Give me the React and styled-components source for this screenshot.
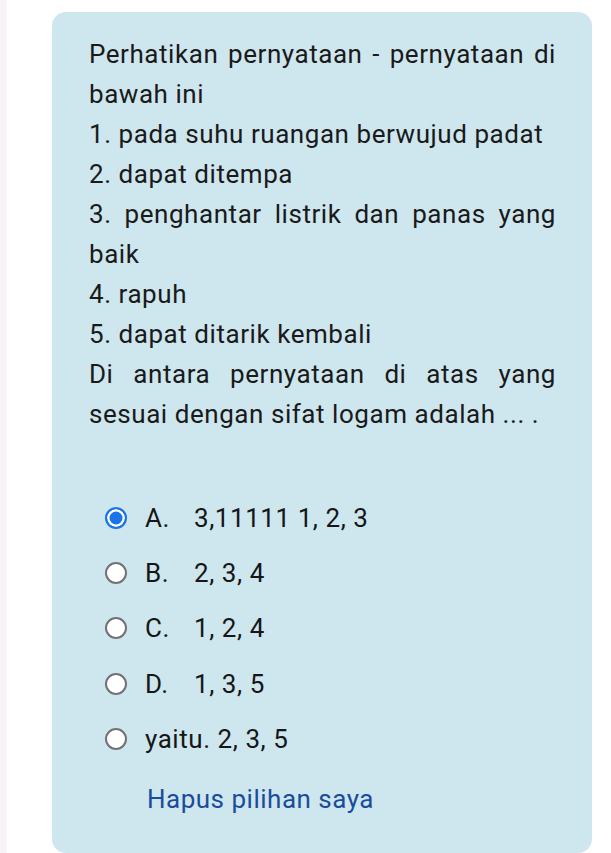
import React, { useState } from 'react'
import styled, { createGlobalStyle } from 'styled-components'

const GlobalStyle = createGlobalStyle`
  html, body {
    margin: 0;
    padding: 0;
    background: #ffffff;
  }
  body {
    font-family: Roboto, "Noto Sans", Arial, sans-serif;
    color: #1b1b1b;
  }
`

const Page = styled.div`
  display: flex;
  min-height: 853px;
  background: #ffffff;
  border-left: 7px solid #f8f3f6;
  box-sizing: border-box;
`

const Card = styled.section`
  margin: 12px 0 0 45px;
  width: 540px;
  box-sizing: border-box;
  padding: 22px 36px 34px 37px;
  background: #cee6ee;
  border-radius: 14px;
  align-self: flex-start;
`

const Question = styled.div`
  font-size: 26px;
  letter-spacing: 0.55px;
  line-height: 40px;
  text-align: justify;
  color: #1a1a1a;

  p {
    margin: 0;
  }
`

const Options = styled.div`
  margin-top: 56px;
  padding-left: 16px;
  display: flex;
  flex-direction: column;
`

const Option = styled.label`
  display: flex;
  align-items: center;
  height: 55.3px;
  font-size: 26px;
  letter-spacing: 0.55px;
  color: #161616;
  cursor: pointer;
`

const Radio = styled.span`
  flex: none;
  width: 22px;
  height: 22px;
  border-radius: 50%;
  box-sizing: border-box;
  background: ${({ checked }) => (checked ? '#1a73e8' : '#ffffff')};
  border: ${({ checked }) => (checked ? '2.5px solid #1a73e8' : '2.5px solid #727272')};
  box-shadow: ${({ checked }) => (checked ? 'inset 0 0 0 2.5px #ffffff' : 'none')};
  margin-right: 18px;
`

const Letter = styled.span`
  display: inline-block;
  width: 49px;
`

const Clear = styled.button`
  margin: 13px 0 0 58px;
  padding: 0;
  border: none;
  background: none;
  font-family: inherit;
  font-size: 26px;
  letter-spacing: 0.5px;
  line-height: 40px;
  color: #1b4c9c;
  cursor: pointer;
  text-align: left;
`

const choices = [
  { letter: 'A.', text: '3,11111 1, 2, 3' },
  { letter: 'B.', text: '2, 3, 4' },
  { letter: 'C.', text: '1, 2, 4' },
  { letter: 'D.', text: '1, 3, 5' },
  { letter: '', text: 'yaitu. 2, 3, 5' },
]

export default function App() {
  const [picked, setPicked] = useState(0)
  return (
    <Page>
      <GlobalStyle />
      <Card>
        <Question>
          <p>Perhatikan pernyataan - pernyataan di bawah ini</p>
          <p>1. pada suhu ruangan berwujud padat</p>
          <p>2. dapat ditempa</p>
          <p>3. penghantar listrik dan panas yang baik</p>
          <p>4. rapuh</p>
          <p>5. dapat ditarik kembali</p>
          <p>Di antara pernyataan di atas yang sesuai dengan sifat logam adalah ... .</p>
        </Question>
        <Options>
          {choices.map((c, i) => (
            <Option key={i} onClick={() => setPicked(i)}>
              <Radio checked={picked === i} />
              {c.letter && <Letter>{c.letter}</Letter>}
              <span>{c.text}</span>
            </Option>
          ))}
        </Options>
        <Clear onClick={() => setPicked(null)}>Hapus pilihan saya</Clear>
      </Card>
    </Page>
  )
}
